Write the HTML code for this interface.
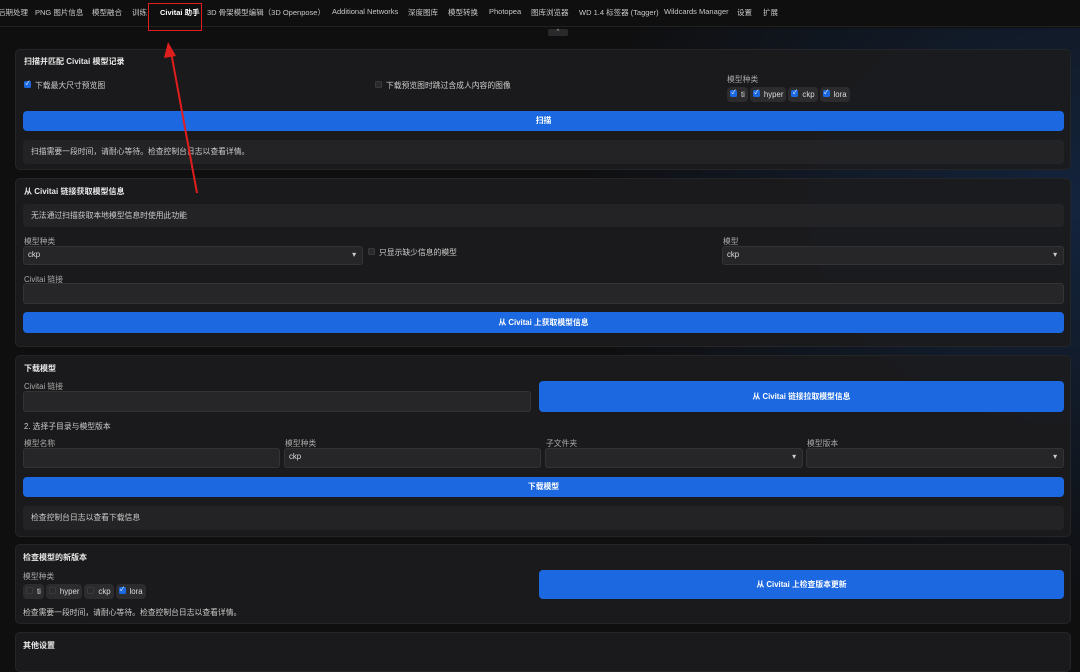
<!DOCTYPE html><html><head><meta charset="utf-8"><style>
*{box-sizing:border-box;margin:0;padding:0}
body{width:1080px;height:652px;overflow:hidden;background:#0f0f10;font-family:"Liberation Sans","Noto Sans CJK SC",sans-serif;font-size:7.8px;color:#d0d0d0;position:relative}
.bg{position:absolute;left:0;top:28px;width:1080px;height:624px;background:radial-gradient(ellipse 500px 400px at 1080px 180px,#13243d 0%,rgba(15,15,16,0) 100%)}
.a{position:absolute}
.nav{top:0;left:0;width:1080px;height:27px;border-bottom:1px solid #222;background:#0f0f10}
.nav span{position:absolute;top:7px;color:#c8c8c8;white-space:nowrap;font-size:7.5px}
.p{position:absolute;left:15px;width:1056px;background:rgba(27,27,29,.92);border:1px solid #252527;border-radius:5px}
.t{position:absolute;font-weight:bold;color:#e8e8e8;font-size:8px}
.btn{position:absolute;background:#1b68e0;border-radius:4px;color:#fff;font-weight:bold;text-align:center}
.inp{position:absolute;background:#262628;border:1px solid #333;border-radius:3px;color:#ddd;padding:3px 4px}
.box{position:absolute;background:#232325;border-radius:4px;color:#ccc;padding:0 8px}
.cb{display:inline-block;width:7px;height:7px;border-radius:1.5px;background:#1b68e0;vertical-align:middle;margin-right:4px;position:relative;top:-1px;color:#fff;font-size:6px;line-height:7px;text-align:center}
.cb.o{background:#2a2a2c;border:1px solid #3a3a3c}
.chip{display:inline-block;background:#2c2c2e;border-radius:4px;padding:3px 3px;margin-right:2px;color:#ddd}
.lbl{position:absolute;color:#aaa}
.arr::after{content:"▾";position:absolute;right:6px;top:3px;color:#ccc}
</style></head><body>
<div class="bg"></div>
<div class="a nav">
<span style="left:-2px">后期处理</span><span style="left:35px">PNG 图片信息</span><span style="left:92px">模型融合</span><span style="left:132px">训练</span>
<span style="left:160px;color:#fff;font-weight:bold">Civitai 助手</span><span style="left:207px">3D 骨架模型编辑（3D Openpose）</span>
<span style="left:332px">Additional Networks</span><span style="left:408px">深度图库</span><span style="left:448px">模型转换</span><span style="left:489px">Photopea</span><span style="left:531px">图库浏览器</span><span style="left:579px">WD 1.4 标签器 (Tagger)</span><span style="left:664px">Wildcards Manager</span><span style="left:737px">设置</span><span style="left:763px">扩展</span>
</div>
<div class="a" style="left:148px;top:3px;width:54px;height:28px;border:1px solid #e01e1e"></div>
<div class="a" style="left:548px;top:29px;width:20px;height:7px;background:#2a2a2c;border-radius:2px;color:#aaa;font-size:6px;text-align:center;line-height:7px">^</div>

<div class="p" style="top:49px;height:121px">
<div class="t" style="left:8px;top:6px">扫描并匹配 Civitai 模型记录</div>
<div class="a" style="left:8px;top:30px"><span class="cb">✓</span>下载最大尺寸预览图</div>
<div class="a" style="left:359px;top:30px"><span class="cb o"></span>下载预览图时跳过含成人内容的图像</div>
<div class="lbl" style="left:711px;top:24px">模型种类</div>
<div class="a" style="left:711px;top:37px"><span class="chip"><span class="cb">✓</span>ti</span><span class="chip"><span class="cb">✓</span>hyper</span><span class="chip"><span class="cb">✓</span>ckp</span><span class="chip"><span class="cb">✓</span>lora</span></div>
<div class="btn" style="left:7px;top:61px;width:1041px;height:20px;line-height:20px">扫描</div>
<div class="box" style="left:7px;top:90px;width:1041px;height:24px;line-height:24px">扫描需要一段时间，请耐心等待。检查控制台日志以查看详情。</div>
</div>

<div class="p" style="top:178px;height:169px">
<div class="t" style="left:8px;top:7px">从 Civitai 链接获取模型信息</div>
<div class="box" style="left:7px;top:25px;width:1041px;height:23px;line-height:23px">无法通过扫描获取本地模型信息时使用此功能</div>
<div class="lbl" style="left:8px;top:57px">模型种类</div>
<div class="inp arr" style="left:7px;top:67px;width:340px;height:19px">ckp</div>
<div class="a" style="left:352px;top:68px"><span class="cb o"></span>只显示缺少信息的模型</div>
<div class="lbl" style="left:707px;top:57px">模型</div>
<div class="inp arr" style="left:706px;top:67px;width:342px;height:19px">ckp</div>
<div class="lbl" style="left:8px;top:95px">Civitai 链接</div>
<div class="inp" style="left:7px;top:104px;width:1041px;height:21px"></div>
<div class="btn" style="left:7px;top:133px;width:1041px;height:21px;line-height:21px">从 Civitai 上获取模型信息</div>
</div>

<div class="p" style="top:355px;height:182px">
<div class="t" style="left:8px;top:7px">下载模型</div>
<div class="lbl" style="left:8px;top:25px">Civitai 链接</div>
<div class="inp" style="left:7px;top:35px;width:508px;height:21px"></div>
<div class="btn" style="left:523px;top:25px;width:525px;height:31px;line-height:31px">从 Civitai 链接拉取模型信息</div>
<div class="a" style="left:8px;top:65px;color:#ccc">2. 选择子目录与模型版本</div>
<div class="lbl" style="left:8px;top:82px">模型名称</div>
<div class="inp" style="left:7px;top:92px;width:257px;height:20px"></div>
<div class="lbl" style="left:269px;top:82px">模型种类</div>
<div class="inp" style="left:268px;top:92px;width:257px;height:20px">ckp</div>
<div class="lbl" style="left:530px;top:82px">子文件夹</div>
<div class="inp arr" style="left:529px;top:92px;width:258px;height:20px"></div>
<div class="lbl" style="left:791px;top:82px">模型版本</div>
<div class="inp arr" style="left:790px;top:92px;width:258px;height:20px"></div>
<div class="btn" style="left:7px;top:121px;width:1041px;height:20px;line-height:20px">下载模型</div>
<div class="box" style="left:7px;top:150px;width:1041px;height:24px;line-height:24px">检查控制台日志以查看下载信息</div>
</div>

<div class="p" style="top:544px;height:80px">
<div class="t" style="left:7px;top:7px">检查模型的新版本</div>
<div class="lbl" style="left:7px;top:26px">模型种类</div>
<div class="a" style="left:7px;top:39px"><span class="chip"><span class="cb o"></span>ti</span><span class="chip"><span class="cb o"></span>hyper</span><span class="chip"><span class="cb o"></span>ckp</span><span class="chip"><span class="cb">✓</span>lora</span></div>
<div class="a" style="left:7px;top:62px;color:#ccc">检查需要一段时间，请耐心等待。检查控制台日志以查看详情。</div>
<div class="btn" style="left:523px;top:25px;width:525px;height:29px;line-height:29px">从 Civitai 上检查版本更新</div>
</div>

<div class="p" style="top:632px;height:40px">
<div class="t" style="left:7px;top:7px">其他设置</div>
</div>

<svg class="a" style="left:0;top:0" width="1080" height="652"><line x1="197" y1="193" x2="171" y2="52" stroke="#e01e1e" stroke-width="2"/><polygon points="168,42 164,58 176,56" fill="#e01e1e"/></svg>
</body></html>
